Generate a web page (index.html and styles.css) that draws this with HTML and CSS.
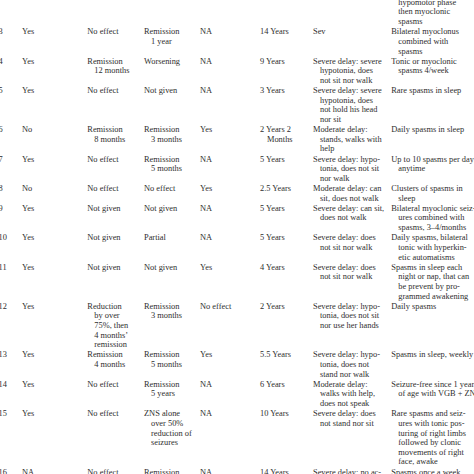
FILE: index.html
```html
<!DOCTYPE html>
<html lang="en">
<head>
<meta charset="utf-8">
<title>Table</title>
<link rel="stylesheet" href="styles.css">
</head>
<body>
<table class="tbl">
<colgroup>
<col class="w1"><col class="w2"><col class="w3"><col class="w4"><col class="w5"><col class="w6"><col class="w7"><col class="w8">
</colgroup>
<tbody>
<tr><td></td><td></td><td></td><td></td><td></td><td></td><td></td><td>Tonic spasms with<br>hypomotor phase<br>then myoclonic<br>spasms</td></tr>
<tr><td>3</td><td>Yes</td><td>No effect</td><td>Remission<br>1 year</td><td>NA</td><td>14 Years</td><td>Sev</td><td>Bilateral myoclonus<br>combined with<br>spasms</td></tr>
<tr><td>4</td><td>Yes</td><td>Remission<br>12 months</td><td>Worsening</td><td>NA</td><td>9 Years</td><td>Severe delay: severe<br>hypotonia, does<br>not sit nor walk</td><td>Tonic or myoclonic<br>spasms 4/week</td></tr>
<tr><td>5</td><td>Yes</td><td>No effect</td><td>Not given</td><td>NA</td><td>3 Years</td><td>Severe delay: severe<br>hypotonia, does<br>not hold his head<br>nor sit</td><td>Rare spasms in sleep</td></tr>
<tr><td>6</td><td>No</td><td>Remission<br>8 months</td><td>Remission<br>3 months</td><td>Yes</td><td>2 Years 2<br>Months</td><td>Moderate delay:<br>stands, walks with<br>help</td><td>Daily spasms in sleep</td></tr>
<tr><td>7</td><td>Yes</td><td>No effect</td><td>Remission<br>5 months</td><td>NA</td><td>5 Years</td><td>Severe delay: hypo-<br>tonia, does not sit<br>nor walk</td><td>Up to 10 spasms per day;<br>anytime</td></tr>
<tr><td>8</td><td>No</td><td>No effect</td><td>No effect</td><td>Yes</td><td>2.5 Years</td><td>Moderate delay: can<br>sit, does not walk</td><td>Clusters of spasms in<br>sleep</td></tr>
<tr><td>9</td><td>Yes</td><td>Not given</td><td>Not given</td><td>NA</td><td>5 Years</td><td>Severe delay: can sit,<br>does not walk</td><td>Bilateral myoclonic seiz-<br>ures combined with<br>spasms, 3–4/months</td></tr>
<tr><td>10</td><td>Yes</td><td>Not given</td><td>Partial</td><td>NA</td><td>5 Years</td><td>Severe delay: does<br>not sit nor walk</td><td>Daily spasms, bilateral<br>tonic with hyperkin-<br>etic automatisms</td></tr>
<tr><td>11</td><td>Yes</td><td>Not given</td><td>Not given</td><td>Yes</td><td>4 Years</td><td>Severe delay: does<br>not sit nor walk</td><td>Spasms in sleep each<br>night or nap, that can<br>be prevent by pro-<br>grammed awakening</td></tr>
<tr><td>12</td><td>Yes</td><td>Reduction<br>by over<br>75%, then<br>4 months’<br>remission</td><td>Remission<br>3 months</td><td>No effect</td><td>2 Years</td><td>Severe delay: hypo-<br>tonia, does not sit<br>nor use her hands</td><td>Daily spasms</td></tr>
<tr><td>13</td><td>Yes</td><td>Remission<br>4 months</td><td>Remission<br>5 months</td><td>Yes</td><td>5.5 Years</td><td>Severe delay: hypo-<br>tonia, does not<br>stand nor walk</td><td>Spasms in sleep, weekly</td></tr>
<tr><td>14</td><td>Yes</td><td>No effect</td><td>Remission<br>5 years</td><td>NA</td><td>6 Years</td><td>Moderate delay:<br>walks with help,<br>does not speak</td><td>Seizure-free since 1 year<br>of age with VGB + ZNS</td></tr>
<tr><td>15</td><td>Yes</td><td>No effect</td><td>ZNS alone<br>over 50%<br>reduction of<br>seizures</td><td>NA</td><td>10 Years</td><td>Severe delay: does<br>not stand nor sit</td><td>Rare spasms and seiz-<br>ures with tonic pos-<br>turing of right limbs<br>followed by clonic<br>movements of right<br>face, awake</td></tr>
<tr><td>16</td><td>NA</td><td>No effect</td><td>Remission</td><td>NA</td><td>14 Years</td><td>Severe delay: no ac-</td><td>Spasms once a week</td></tr>
</tbody>
</table>
</body>
</html>
```
FILE: styles.css
```css
html, body {
  margin: 0;
  padding: 0;
  background: #ffffff;
  overflow: hidden;
  width: 474px;
  height: 474px;
}
.tbl {
  border-collapse: collapse;
  table-layout: fixed;
  width: 482.8px;
  margin: -11.8px 0 0 -1.5px;
  font-family: "Liberation Serif", serif;
  font-size: 8.4px;
  line-height: 9.64px;
  color: #2e2e2e;
}
.tbl td {
  padding: 0 0 0.5px 7px;
  text-indent: -7px;
  vertical-align: top;
  white-space: nowrap;
  overflow: visible;
}
.w1 { width: 23.5px; }
.w2 { width: 65.3px; }
.w3 { width: 56.7px; }
.w4 { width: 56px; }
.w5 { width: 60px; }
.w6 { width: 53px; }
.w7 { width: 78.3px; }
.w8 { width: 90px; }
```
